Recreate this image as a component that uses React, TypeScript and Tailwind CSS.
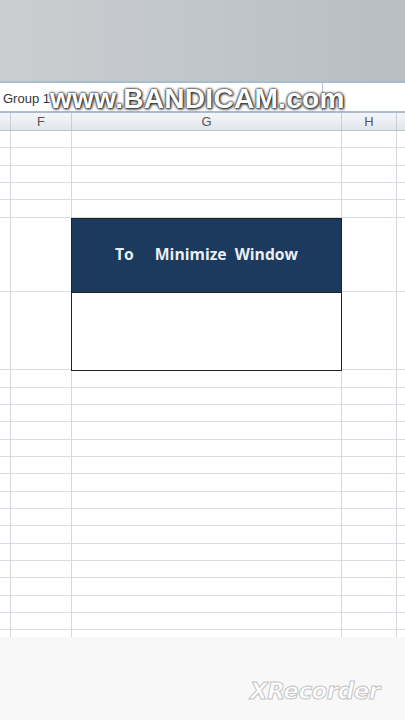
import React from 'react';

// rows below the column header, top to bottom
const topRows = 5;
const lowerRows = 14;

const Cells: React.FC<{ count: number }> = ({ count }) => (
  <>
    {Array.from({ length: count }).map((_, i) => (
      <div key={i} className="h-[17.33px] shrink-0 border-b border-[#d9dde2]" />
    ))}
  </>
);

const PlainColumn: React.FC<{ className: string }> = ({ className }) => (
  <div className={`flex flex-col border-r border-[#d3d8de] ${className}`}>
    <Cells count={topRows} />
    <div className="h-[74px] shrink-0 border-b border-[#d9dde2]" />
    <div className="h-[78px] shrink-0 border-b border-[#d9dde2]" />
    <div className="h-[18px] shrink-0 border-b border-[#d9dde2]" />
    <Cells count={lowerRows} />
    <div className="h-[7px] shrink-0" />
  </div>
);

const App: React.FC = () => {
  return (
    <div className="relative w-[405px] h-[720px] overflow-hidden bg-[#f8f8f8] font-['Liberation_Sans',sans-serif]">
      {/* ribbon area */}
      <div className="h-[81px] bg-gradient-to-r from-[#cbced1] via-[#c1c6ca] to-[#b7bec4]" />

      {/* formula bar */}
      <div className="flex h-[32px] border-t-2 border-b-2 border-[#a8bbd0] bg-white">
        <div className="w-[323px] border-r border-[#b7c3cf] pl-[3px] pt-[6px] text-[13px] text-[#333]">Group 1</div>
        <div className="flex-1" />
      </div>

      {/* column header */}
      <div className="flex h-[18px] border-b border-[#b9c4cf] bg-gradient-to-b from-[#f4f6f9] to-[#e1e6eb] text-[13px] leading-[18px] text-[#555]">
        <div className="w-[11px] border-r border-[#c6ced7]" />
        <div className="w-[61px] border-r border-[#c6ced7] text-center">F</div>
        <div className="w-[270px] border-r border-[#c6ced7] text-center">G</div>
        <div className="w-[55px] border-r border-[#c6ced7] text-center">H</div>
        <div className="flex-1" />
      </div>

      {/* sheet grid */}
      <div className="flex bg-white">
        <PlainColumn className="w-[11px]" />
        <PlainColumn className="w-[61px]" />
        <div className="flex w-[270px] flex-col border-r border-[#d3d8de]">
          <Cells count={topRows} />
          <div className="-mx-px flex h-[153px] shrink-0 flex-col border-[1.5px] border-[#222]">
            <div className="flex h-[74px] items-center justify-center gap-[21px] border-b-[1.5px] border-[#222] bg-[#1b3a5d] font-['Open_Sans',sans-serif] text-[15.7px] font-bold text-[#e9eff6]">
              <span>To</span>
              <span className="flex gap-[8px]">
                <span>Minimize</span>
                <span>Window</span>
              </span>
            </div>
            <div className="flex-1 bg-white" />
          </div>
          <div className="h-[17px] shrink-0 border-b border-[#d9dde2]" />
          <Cells count={lowerRows} />
          <div className="h-[7px] shrink-0" />
        </div>
        <PlainColumn className="w-[55px]" />
        <div className="flex-1">
          <PlainColumn className="w-full border-r-0" />
        </div>
      </div>

      {/* recorder watermarks */}
      <div className="absolute left-[50px] top-[85px] text-[28px] font-bold leading-none tracking-[0.3px] text-white [text-shadow:0_0_2px_#2a2a2a,0_0_3px_#2a2a2a,1px_1px_3px_#111]">
        www.BANDICAM.com
      </div>
      <div className="absolute left-[250px] top-[674px] font-['DejaVu_Sans',sans-serif] text-[23px] font-bold italic tracking-[-0.5px] text-white [-webkit-text-stroke:1px_#c4c4c4]">
        XRecorder
      </div>
    </div>
  );
};

export default App;
